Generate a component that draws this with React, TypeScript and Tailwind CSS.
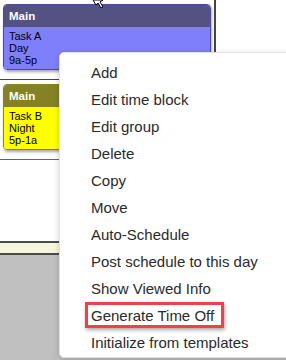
const items = [
  "Add",
  "Edit time block",
  "Edit group",
  "Delete",
  "Copy",
  "Move",
  "Auto-Schedule",
  "Post schedule to this day",
  "Show Viewed Info",
  "Generate Time Off",
  "Initialize from templates",
];

type CardProps = {
  head: string;
  body: string;
  lines: string[];
  border: string;
};

const Card = ({ head, body, lines, border }: CardProps) => (
  <div
    className={`w-[208px] rounded-[4px] overflow-hidden border ${border} shadow-[1px_2px_3px_rgba(0,0,0,0.35)]`}
  >
    <div className={`h-[22px] ${head} pl-[5px] pt-[4px] text-[11.5px] font-bold leading-[14px] text-white`}>
      Main
    </div>
    <div className={`h-[42px] ${body} pl-[5px] pt-[3px] text-[11px] leading-[12px] text-black`}>
      {lines.map((l) => (
        <div key={l}>{l}</div>
      ))}
    </div>
  </div>
);

const App = () => {
  return (
    <div className="relative w-[286px] h-[360px] overflow-hidden bg-white font-['Liberation_Sans',Arial,sans-serif]">
      <div className="flex flex-col h-full">
        <div className="flex h-[80px] border-b border-[#444]">
          <div className="w-[216px] border-r-2 border-[#444] pl-[3px] pt-[4px]">
            <Card
              head="bg-[#545282]"
              body="bg-[#7f7ffc]"
              border="border-[#4c4aa0]"
              lines={["Task A", "Day", "9a-5p"]}
            />
          </div>
        </div>
        <div className="flex h-[80px] border-b border-[#666]">
          <div className="w-[216px] pl-[3px] pt-[4px]">
            <Card
              head="bg-[#858226]"
              body="bg-[#ffff00]"
              border="border-[#8a8520]"
              lines={["Task B", "Night", "5p-1a"]}
            />
          </div>
        </div>
        <div className="h-[81px]" />
        <div className="h-[14px] bg-[#f5f5dc] border-y-2 border-[#4a4a4a]" />
        <div className="flex-1 bg-[#c0c0c0]" />
      </div>

      <svg className="absolute left-[92px] top-0" width="12" height="8" viewBox="0 0 12 8">
        <path d="M1 0 L4 5 L6 3 L9 8 L11 7 L8 2 L11 0 Z" fill="#fff" stroke="#000" strokeWidth="1" />
      </svg>

      <div className="absolute left-[59px] top-[52px] w-[240px] h-[306px] rounded-[5px] bg-white border border-[#e2e2e2] shadow-[0_2px_6px_rgba(0,0,0,0.18)] pt-[6px]">
        {items.map((t) => (
          <div key={t} className="h-[27px] pl-[31px] text-[15px] leading-[27px] text-[#2a2a2a]">
            {t}
          </div>
        ))}
        <div className="absolute left-[25px] top-[249px] w-[139px] h-[26px] border-[3px] border-[#ec4349] shadow-[1px_2px_4px_rgba(0,0,0,0.35)]" />
      </div>
    </div>
  );
};

export default App;
